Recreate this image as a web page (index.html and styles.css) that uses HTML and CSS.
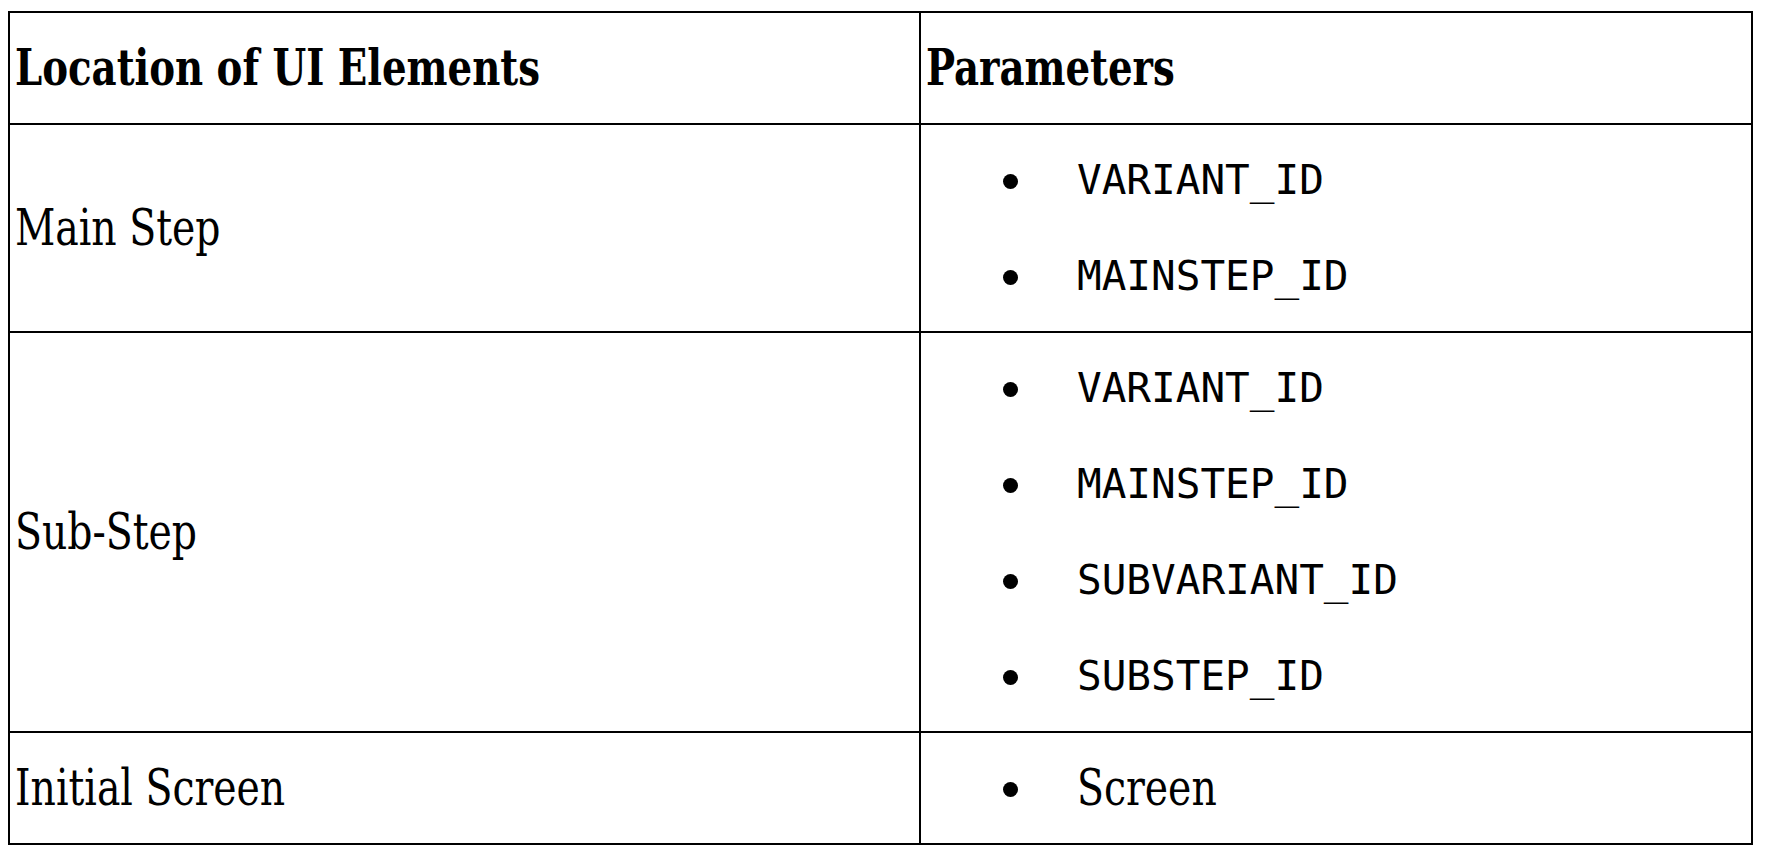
FILE: index.html
```html
<!DOCTYPE html>
<html lang="en">
<head>
<meta charset="utf-8">
<title>Parameters</title>
<link rel="stylesheet" href="styles.css">
</head>
<body>
<table class="params">
  <colgroup><col class="col-loc"><col class="col-par"></colgroup>
  <thead>
    <tr><th><span class="cond">Location of UI Elements</span></th><th><span class="cond">Parameters</span></th></tr>
  </thead>
  <tbody>
    <tr>
      <td><span class="cond">Main Step</span></td>
      <td><ul class="plist"><li><code>VARIANT_ID</code></li><li><code>MAINSTEP_ID</code></li></ul></td>
    </tr>
    <tr>
      <td><span class="cond">Sub-Step</span></td>
      <td><ul class="plist"><li><code>VARIANT_ID</code></li><li><code>MAINSTEP_ID</code></li><li><code>SUBVARIANT_ID</code></li><li><code>SUBSTEP_ID</code></li></ul></td>
    </tr>
    <tr>
      <td><span class="cond">Initial Screen</span></td>
      <td><ul class="plist"><li><span class="cond">Screen</span></li></ul></td>
    </tr>
  </tbody>
</table>
</body>
</html>
```
FILE: styles.css
```css
html, body { background: #fff; }
body {
  margin: 0;
  padding: 11px 0 0 8px;
  color: #000;
  font-family: "DejaVu Serif Condensed", "DejaVu Serif", serif;
  font-stretch: condensed;
  font-size: 50px;
}
.params {
  border-collapse: collapse;
  table-layout: fixed;
  width: 1745px;
}
.col-loc { width: 911px; }
.params th, .params td {
  border: 2px solid #000;
  padding: 7px 6px 7px 5px;
  text-align: left;
  vertical-align: middle;
  line-height: 96px;
}
.params th { font-weight: bold; }
.cond {
  display: inline-block;
  white-space: nowrap;
  transform: scaleX(0.875);
  transform-origin: 0 50%;
}
.params th .cond { transform: scaleX(0.86); }
.plist {
  list-style: none;
  margin: 0;
  padding: 0 0 0 77px;
}
.plist li {
  display: flex;
  align-items: center;
  height: 96px;
}
.plist li::before {
  content: "";
  flex: none;
  width: 15px;
  height: 15px;
  border-radius: 50%;
  background: #000;
  margin-right: 59px;
  margin-top: 3px;
}
.plist code {
  font-family: "DejaVu Sans Mono", monospace;
  font-size: 41px;
}
```
